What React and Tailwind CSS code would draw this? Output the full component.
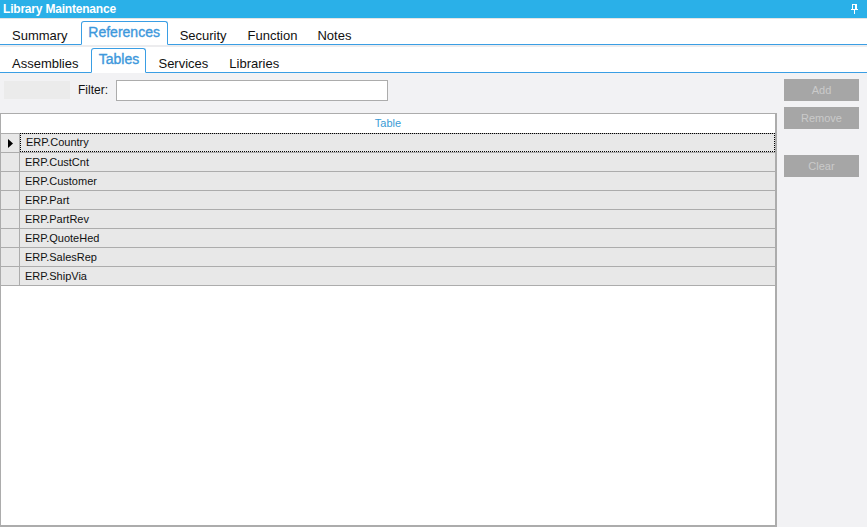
import React from "react";

const rows = [
  "ERP.Country",
  "ERP.CustCnt",
  "ERP.Customer",
  "ERP.Part",
  "ERP.PartRev",
  "ERP.QuoteHed",
  "ERP.SalesRep",
  "ERP.ShipVia",
];

function Pin() {
  return (
    <svg width="9" height="10" viewBox="0 0 9 10" className="block">
      <rect x="2" y="0" width="5" height="1" fill="white" />
      <rect x="2" y="0" width="1" height="6" fill="white" />
      <rect x="5" y="0" width="2" height="6" fill="white" />
      <rect x="1" y="5" width="7" height="1" fill="white" />
      <rect x="4" y="6" width="1" height="4" fill="white" />
    </svg>
  );
}

export default function App() {
  return (
    <div
      className="w-[867px] h-[527px] flex flex-col bg-[#f2f2f4] overflow-hidden"
      style={{ fontFamily: '"Liberation Sans", Arial, sans-serif' }}
    >
      {/* Title bar */}
      <div className="h-[18px] bg-[#2ab0e8] flex items-center justify-between pl-[3px] pr-[8px]">
        <span className="text-white font-bold text-[12px] leading-none tracking-[-0.2px]">
          Library Maintenance
        </span>
        <Pin />
      </div>

      {/* Tab row 1 */}
      <div className="h-[27px] bg-white border-t border-[#e4e4e4] border-b border-b-[#3a9ee4] flex items-end pl-[12px] text-[13px] text-[#111]">
        <div className="h-[17px] flex items-center">Summary</div>
        <div className="ml-[13px] w-[87px] h-[24px] -mb-px bg-white border border-[#3a9ee4] border-b-white rounded-t-[3px] flex items-center justify-center pb-[2px] text-[14px] text-[#3d98dc] [-webkit-text-stroke:0.35px_#3d98dc]">
          References
        </div>
        <div className="ml-[12px] h-[17px] flex items-center">Security</div>
        <div className="ml-[21px] h-[17px] flex items-center">Function</div>
        <div className="ml-[20px] h-[17px] flex items-center">Notes</div>
      </div>

      {/* Tab row 2 */}
      <div className="h-[28px] bg-white border-t-2 border-[#ececee] border-b border-b-[#3a9ee4] flex items-end pl-[12px] text-[13px] text-[#111]">
        <div className="h-[17px] flex items-center">Assemblies</div>
        <div className="ml-[13px] w-[55px] h-[25px] -mb-px bg-white border border-[#3a9ee4] border-b-white rounded-t-[3px] flex items-center justify-center pb-[2px] text-[14px] text-[#3d98dc] [-webkit-text-stroke:0.35px_#3d98dc]">
          Tables
        </div>
        <div className="ml-[12px] h-[17px] flex items-center">Services</div>
        <div className="ml-[21px] h-[17px] flex items-center">Libraries</div>
      </div>

      {/* Body */}
      <div className="flex-1 flex min-h-0">
        <div className="w-[777px] flex flex-col">
          {/* Filter */}
          <div className="h-[40px] flex items-start pt-[7px]">
            <div className="ml-[4px] mt-[1px] w-[66px] h-[18px] bg-[#ebebeb]" />
            <div className="ml-[8px] w-[30px] h-[20px] flex items-center text-[12px] text-[#111]">
              Filter:
            </div>
            <div className="ml-[8px] w-[272px] h-[21px] bg-white border border-[#acacac]" />
          </div>

          {/* Grid */}
          <div className="flex-1 bg-white border border-[#acacac] border-r-2 border-b-2 flex flex-col text-[11px]">
            <div className="h-[20px] flex items-center justify-center border-b border-[#acacac] text-[#3a9bd5]">
              Table
            </div>
            {rows.map((r, i) => (
              <div key={r} className="h-[19px] flex bg-[#e8e8e8] border-b border-[#acacac]">
                <div className="w-[19px] border-r border-[#acacac] flex items-center pl-[7px]">
                  {i === 0 && (
                    <svg width="5" height="9" viewBox="0 0 5 9">
                      <path d="M0 0 L5 4.5 L0 9 Z" fill="#000" />
                    </svg>
                  )}
                </div>
                <div
                  className={`flex-1 flex items-center pl-[5px] text-[#111] ${
                    i === 0 ? "border border-dotted border-black -mt-px" : ""
                  }`}
                >
                  {r}
                </div>
              </div>
            ))}
          </div>
        </div>

        {/* Buttons */}
        <div className="ml-[7px] pt-[6px] flex flex-col text-[11px]">
          <div className="w-[75px] h-[22px] bg-[#a6a6a6] text-[#cacaca] flex items-center justify-center">
            Add
          </div>
          <div className="mt-[6px] w-[75px] h-[22px] bg-[#a6a6a6] text-[#cacaca] flex items-center justify-center">
            Remove
          </div>
          <div className="mt-[26px] w-[75px] h-[22px] bg-[#a6a6a6] text-[#cacaca] flex items-center justify-center">
            Clear
          </div>
        </div>
      </div>
    </div>
  );
}
